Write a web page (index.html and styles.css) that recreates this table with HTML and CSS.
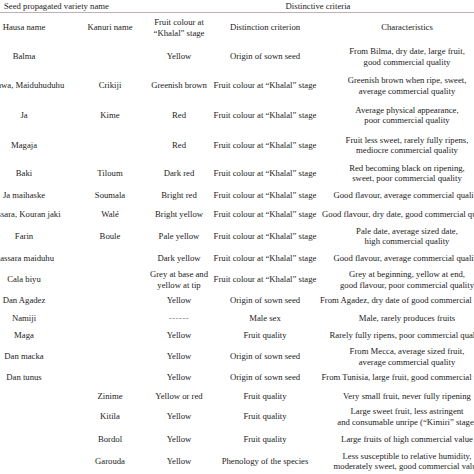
FILE: index.html
```html
<!DOCTYPE html>
<html lang="en">
<head>
<meta charset="utf-8">
<title>Date palm varieties</title>
<link rel="stylesheet" href="styles.css">
</head>
<body>
<div class="frame">
<table class="varieties">
  <colgroup>
    <col class="c-hausa">
    <col class="c-kanuri">
    <col class="c-colour">
    <col class="c-crit">
    <col class="c-char">
  </colgroup>
  <thead>
    <tr class="top h13">
      <th colspan="2" class="group-left">Seed propagated variety name</th>
      <th colspan="3" class="group-right">Distinctive criteria</th>
    </tr>
    <tr class="h29">
      <th>Hausa name</th>
      <th>Kanuri name</th>
      <th>Fruit colour at<br>&ldquo;Khalal&rdquo; stage</th>
      <th>Distinction criterion</th>
      <th>Characteristics</th>
    </tr>
  </thead>
  <tbody>
    <tr class="h29"><td>Balma</td><td></td><td>Yellow</td><td>Origin of sown seed</td><td>From Bilma, dry date, large fruit,<br>good commercial quality</td></tr>
    <tr class="h29"><td>Kasawa, Maiduhuduhu</td><td>Crikiji</td><td>Greenish brown</td><td>Fruit colour at &ldquo;Khalal&rdquo; stage</td><td>Greenish brown when ripe, sweet,<br>average commercial quality</td></tr>
    <tr class="h30"><td>Ja</td><td>Kime</td><td>Red</td><td>Fruit colour at &ldquo;Khalal&rdquo; stage</td><td>Average physical appearance,<br>poor commercial quality</td></tr>
    <tr class="h30"><td>Magaja</td><td></td><td>Red</td><td>Fruit colour at &ldquo;Khalal&rdquo; stage</td><td>Fruit less sweet, rarely fully ripens,<br>mediocre commercial quality</td></tr>
    <tr class="h26"><td>Baki</td><td>Tiloum</td><td>Dark red</td><td>Fruit colour at &ldquo;Khalal&rdquo; stage</td><td>Red becoming black on ripening,<br>sweet, poor commercial quality</td></tr>
    <tr class="h19"><td>Ja maihaske</td><td>Soumala</td><td>Bright red</td><td>Fruit colour at &ldquo;Khalal&rdquo; stage</td><td>Good flavour, average commercial quality</td></tr>
    <tr class="h19"><td>Kassara, Kouran jaki</td><td>Walé</td><td>Bright yellow</td><td>Fruit colour at &ldquo;Khalal&rdquo; stage</td><td>Good flavour, dry date, good commercial quality</td></tr>
    <tr class="h24"><td>Farin</td><td>Boule</td><td>Pale yellow</td><td>Fruit colour at &ldquo;Khalal&rdquo; stage</td><td>Pale date, average sized date,<br>high commercial quality</td></tr>
    <tr class="h21"><td>Kassara maiduhu</td><td></td><td>Dark yellow</td><td>Fruit colour at &ldquo;Khalal&rdquo; stage</td><td>Good flavour, average commercial quality</td></tr>
    <tr class="h21"><td>Cala biyu</td><td></td><td>Grey at base and<br>yellow at tip</td><td>Fruit colour at &ldquo;Khalal&rdquo; stage</td><td>Grey at beginning, yellow at end,<br>good flavour, poor commercial quality</td></tr>
    <tr class="h20"><td>Dan Agadez</td><td></td><td>Yellow</td><td>Origin of sown seed</td><td>From Agadez, dry date of good commercial quality</td></tr>
    <tr class="h16"><td>Namiji</td><td></td><td class="dash">------</td><td>Male sex</td><td>Male, rarely produces fruits</td></tr>
    <tr class="h19"><td>Maga</td><td></td><td>Yellow</td><td>Fruit quality</td><td>Rarely fully ripens, poor commercial quality</td></tr>
    <tr class="h23"><td>Dan macka</td><td></td><td>Yellow</td><td>Origin of sown seed</td><td>From Mecca, average sized fruit,<br>average commercial quality</td></tr>
    <tr class="h19"><td>Dan tunus</td><td></td><td>Yellow</td><td>Origin of sown seed</td><td>From Tunisia, large fruit, good commercial value</td></tr>
    <tr class="h18"><td></td><td>Zinime</td><td>Yellow or red</td><td>Fruit quality</td><td>Very small fruit, never fully ripening</td></tr>
    <tr class="h23"><td></td><td>Kitila</td><td>Yellow</td><td>Fruit quality</td><td>Large sweet fruit, less astringent<br>and consumable unripe (&ldquo;Kimiri&rdquo; stage)</td></tr>
    <tr class="h22"><td></td><td>Bordol</td><td>Yellow</td><td>Fruit quality</td><td>Large fruits of high commercial value</td></tr>
    <tr class="h22"><td></td><td>Garouda</td><td>Yellow</td><td>Phenology of the species</td><td>Less susceptible to relative humidity,<br>moderately sweet, good commercial value</td></tr>
  </tbody>
</table>
</div>
</body>
</html>
```

FILE: styles.css
```css
html, body {
  margin: 0;
  padding: 0;
  background: #ffffff;
}

body {
  width: 474px;
  height: 474px;
  overflow: hidden;
}

.frame {
  width: 474px;
  height: 474px;
  overflow: hidden;
}

.varieties {
  margin-left: -24px;
  border-collapse: separate;
  border-spacing: 0;
  table-layout: fixed;
  width: 518px;
  font-family: "Liberation Serif", "Times New Roman", serif;
  font-size: 8.7px;
  line-height: 10.5px;
  color: #222222;
}

.c-hausa { width: 96px; }
.c-kanuri { width: 76px; }
.c-colour { width: 62px; }
.c-crit { width: 110px; }
.c-char { width: 174px; }

.varieties th,
.varieties td {
  padding: 0;
  font-weight: normal;
  text-align: center;
  vertical-align: middle;
  white-space: nowrap;
}

.top th {
  border-bottom: 1px solid #c4adb3;
}

.varieties .group-left {
  text-align: left;
  padding-left: 28px;
}

.varieties .group-right {
  padding-right: 6px;
}

.dash {
  letter-spacing: 0.5px;
  color: #777777;
}

.h13 { height: 13px; }
.h16 { height: 16px; }
.h18 { height: 18px; }
.h19 { height: 19px; }
.h20 { height: 20px; }
.h21 { height: 21px; }
.h22 { height: 22px; }
.h23 { height: 23px; }
.h24 { height: 24px; }
.h26 { height: 26px; }
.h29 { height: 29px; }
.h30 { height: 30px; }
```
